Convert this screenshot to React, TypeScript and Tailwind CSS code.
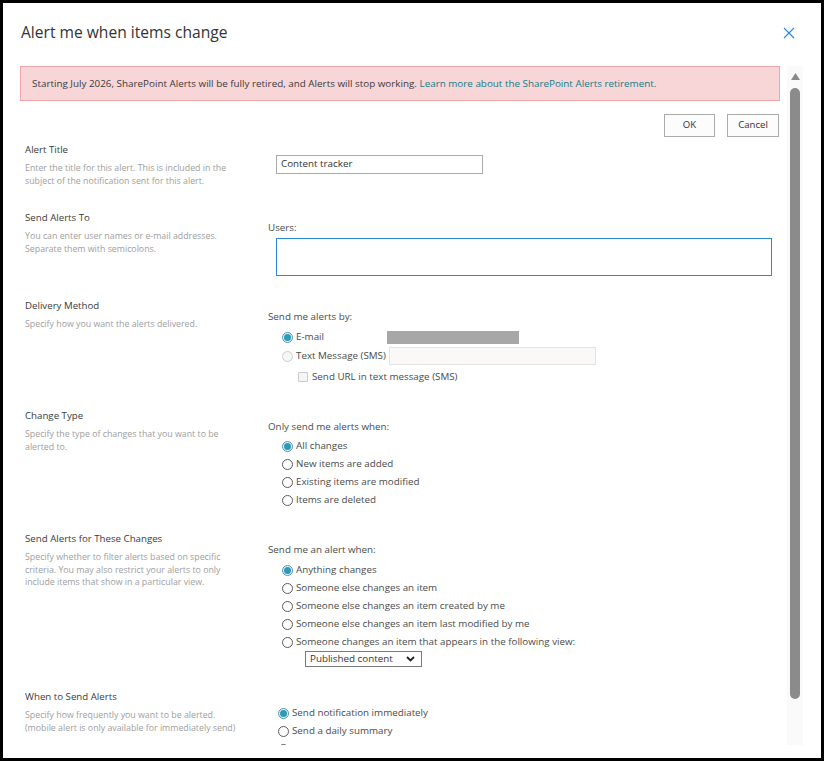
import React from "react";

const font = { fontFamily: '"Segoe UI", "Open Sans", sans-serif' };

function Radio({ checked = false, disabled = false }: { checked?: boolean; disabled?: boolean }) {
  if (checked) {
    return (
      <span className="w-[11px] h-[11px] rounded-full border border-[#4f97bd] bg-[#e6f2f7] flex items-center justify-center shrink-0">
        <span className="w-[7px] h-[7px] rounded-full bg-[#2f9ab6]" />
      </span>
    );
  }
  return (
    <span
      className={
        disabled
          ? "w-[11px] h-[11px] rounded-full border border-[#cfcfcf] bg-[#f6f6f6] shrink-0"
          : "w-[11px] h-[11px] rounded-full border border-[#5a5a5a] bg-white shrink-0"
      }
    />
  );
}

function RadioRow({ label, checked = false }: { label: string; checked?: boolean }) {
  return (
    <div className="h-[18px] flex items-center gap-[3px] text-[9.8px] text-[#4a4a4a]">
      <Radio checked={checked} />
      <span>{label}</span>
    </div>
  );
}

function Section({
  title,
  desc,
  height,
  children,
}: {
  title: string;
  desc: string[];
  height: number;
  children: React.ReactNode;
}) {
  return (
    <div className="grid grid-cols-[248px_1fr]" style={{ height }}>
      <div className="pl-[5px]">
        <div className="text-[9.7px] leading-[14px] text-[#3a3a3a]">{title}</div>
        <div className="mt-[5px] text-[8.8px] leading-[12.5px] text-[#9e9e9e]">
          {desc.map((d) => (
            <div key={d}>{d}</div>
          ))}
        </div>
      </div>
      <div>{children}</div>
    </div>
  );
}

export default function App() {
  return (
    <div style={font} className="w-[824px] h-[761px] border-[3px] border-black bg-white flex flex-col overflow-hidden box-border">
      {/* Header */}
      <div className="h-[63px] shrink-0 flex items-start justify-between pl-[18px] pr-[26px] pt-[19px]">
        <div className="text-[15.6px] leading-[21px] text-[#333333]">Alert me when items change</div>
        <svg width="12" height="12" viewBox="0 0 12 12" className="mt-[5px]">
          <path d="M1 1 L11 11 M11 1 L1 11" stroke="#2b88d8" strokeWidth="1.1" fill="none" />
        </svg>
      </div>

      {/* Body */}
      <div className="h-[679px] shrink-0 flex overflow-hidden">
        <div className="ml-[17px] w-[760px] overflow-hidden">
          {/* Banner */}
          <div className="h-[35px] bg-[#f8d6d8] border border-[#f2a6a9] flex items-center pl-[11px] text-[9.85px] text-[#3a3a3a]">
            <span>
              Starting July 2026, SharePoint Alerts will be fully retired, and Alerts will stop working.{" "}
              <span className="text-[#0f7d87]">Learn more about the SharePoint Alerts retirement.</span>
            </span>
          </div>

          {/* Buttons */}
          <div className="mt-[13px] h-[23px] flex justify-end gap-[12px] pr-[1px]">
            <button className="w-[51px] h-[23px] bg-[#fcfcfc] border border-[#ababab] text-[9.6px] text-[#333333]">OK</button>
            <button className="w-[52px] h-[23px] bg-[#fcfcfc] border border-[#ababab] text-[9.6px] text-[#333333]">Cancel</button>
          </div>

          <div className="mt-[6px]">
            <Section
              title="Alert Title"
              height={68}
              desc={["Enter the title for this alert. This is included in the", "subject of the notification sent for this alert."]}
            >
              <div className="pl-[8px] pt-[12px]">
                <div className="w-[207px] h-[19px] border border-[#ababab] flex items-center pl-[4px] text-[9.8px] text-[#333333]">
                  Content tracker
                </div>
              </div>
            </Section>

            <Section
              title="Send Alerts To"
              height={88}
              desc={["You can enter user names or e-mail addresses.", "Separate them with semicolons."]}
            >
              <div className="pt-[10px]">
                <div className="text-[9.8px] leading-[14px] text-[#4a4a4a]">Users:</div>
                <div className="ml-[8px] mt-[3px] w-[496px] h-[38px] border-[1.5px] border-[#2b88d8]" />
              </div>
            </Section>

            <Section title="Delivery Method" height={110} desc={["Specify how you want the alerts delivered."]}>
              <div className="pt-[11px]">
                <div className="text-[9.8px] leading-[14px] text-[#4a4a4a]">Send me alerts by:</div>
                <div className="pl-[14px] mt-[4px]">
                  <div className="h-[18px] flex items-center gap-[3px] text-[9.8px] text-[#4a4a4a]">
                    <Radio checked />
                    <span className="w-[88px]">E-mail</span>
                    <span className="w-[132px] h-[13px] bg-[#a7a7a7]" />
                  </div>
                  <div className="h-[20px] flex items-center gap-[3px] text-[9.8px] text-[#4a4a4a]">
                    <Radio disabled />
                    <span>Text Message (SMS)</span>
                    <span className="w-[207px] h-[18px] bg-[#faf9f8] border border-[#e4e4e4]" />
                  </div>
                  <div className="h-[22px] flex items-center gap-[4px] pl-[16px] text-[9.8px] text-[#4a4a4a]">
                    <span className="w-[10px] h-[10px] border border-[#c9c9c9] bg-[#f5f5f5] rounded-[1px]" />
                    <span>Send URL in text message (SMS)</span>
                  </div>
                </div>
              </div>
            </Section>

            <Section
              title="Change Type"
              height={123}
              desc={["Specify the type of changes that you want to be", "alerted to."]}
            >
              <div className="pt-[11px]">
                <div className="text-[9.8px] leading-[14px] text-[#4a4a4a]">Only send me alerts when:</div>
                <div className="pl-[14px] mt-[3px]">
                  <RadioRow label="All changes" checked />
                  <RadioRow label="New items are added" />
                  <RadioRow label="Existing items are modified" />
                  <RadioRow label="Items are deleted" />
                </div>
              </div>
            </Section>

            <Section
              title="Send Alerts for These Changes"
              height={158}
              desc={[
                "Specify whether to filter alerts based on specific",
                "criteria. You may also restrict your alerts to only",
                "include items that show in a particular view.",
              ]}
            >
              <div className="pt-[11px]">
                <div className="text-[9.8px] leading-[14px] text-[#4a4a4a]">Send me an alert when:</div>
                <div className="pl-[14px] mt-[4px]">
                  <RadioRow label="Anything changes" checked />
                  <RadioRow label="Someone else changes an item" />
                  <RadioRow label="Someone else changes an item created by me" />
                  <RadioRow label="Someone else changes an item last modified by me" />
                  <RadioRow label="Someone changes an item that appears in the following view:" />
                </div>
                <div className="ml-[37px] w-[117px] h-[16px] border border-[#7a7a7a] flex items-center justify-between pl-[4px] pr-[6px] text-[9.8px] text-[#333333]">
                  <span>Published content</span>
                  <svg width="9" height="6" viewBox="0 0 9 6">
                    <path d="M1 1 L4.5 4.5 L8 1" stroke="#222222" strokeWidth="1.8" fill="none" />
                  </svg>
                </div>
              </div>
            </Section>

            <Section
              title="When to Send Alerts"
              height={158}
              desc={["Specify how frequently you want to be alerted.", "(mobile alert is only available for immediately send)"]}
            >
              <div className="pt-[14px] pl-[10px]">
                <RadioRow label="Send notification immediately" checked />
                <RadioRow label="Send a daily summary" />
                <RadioRow label="Send a weekly summary" />
              </div>
            </Section>
          </div>
        </div>

        {/* Scrollbar */}
        <div className="ml-[7px] w-[16px] h-full bg-[#fafafa] flex flex-col items-center pt-[7px]">
          <svg width="9" height="7" viewBox="0 0 9 7">
            <path d="M4.5 0 L9 7 L0 7 Z" fill="#8a8a8a" />
          </svg>
          <div className="mt-[8px] w-[10px] h-[611px] rounded-full bg-[#8b8b8b]" />
        </div>
      </div>
    </div>
  );
}
